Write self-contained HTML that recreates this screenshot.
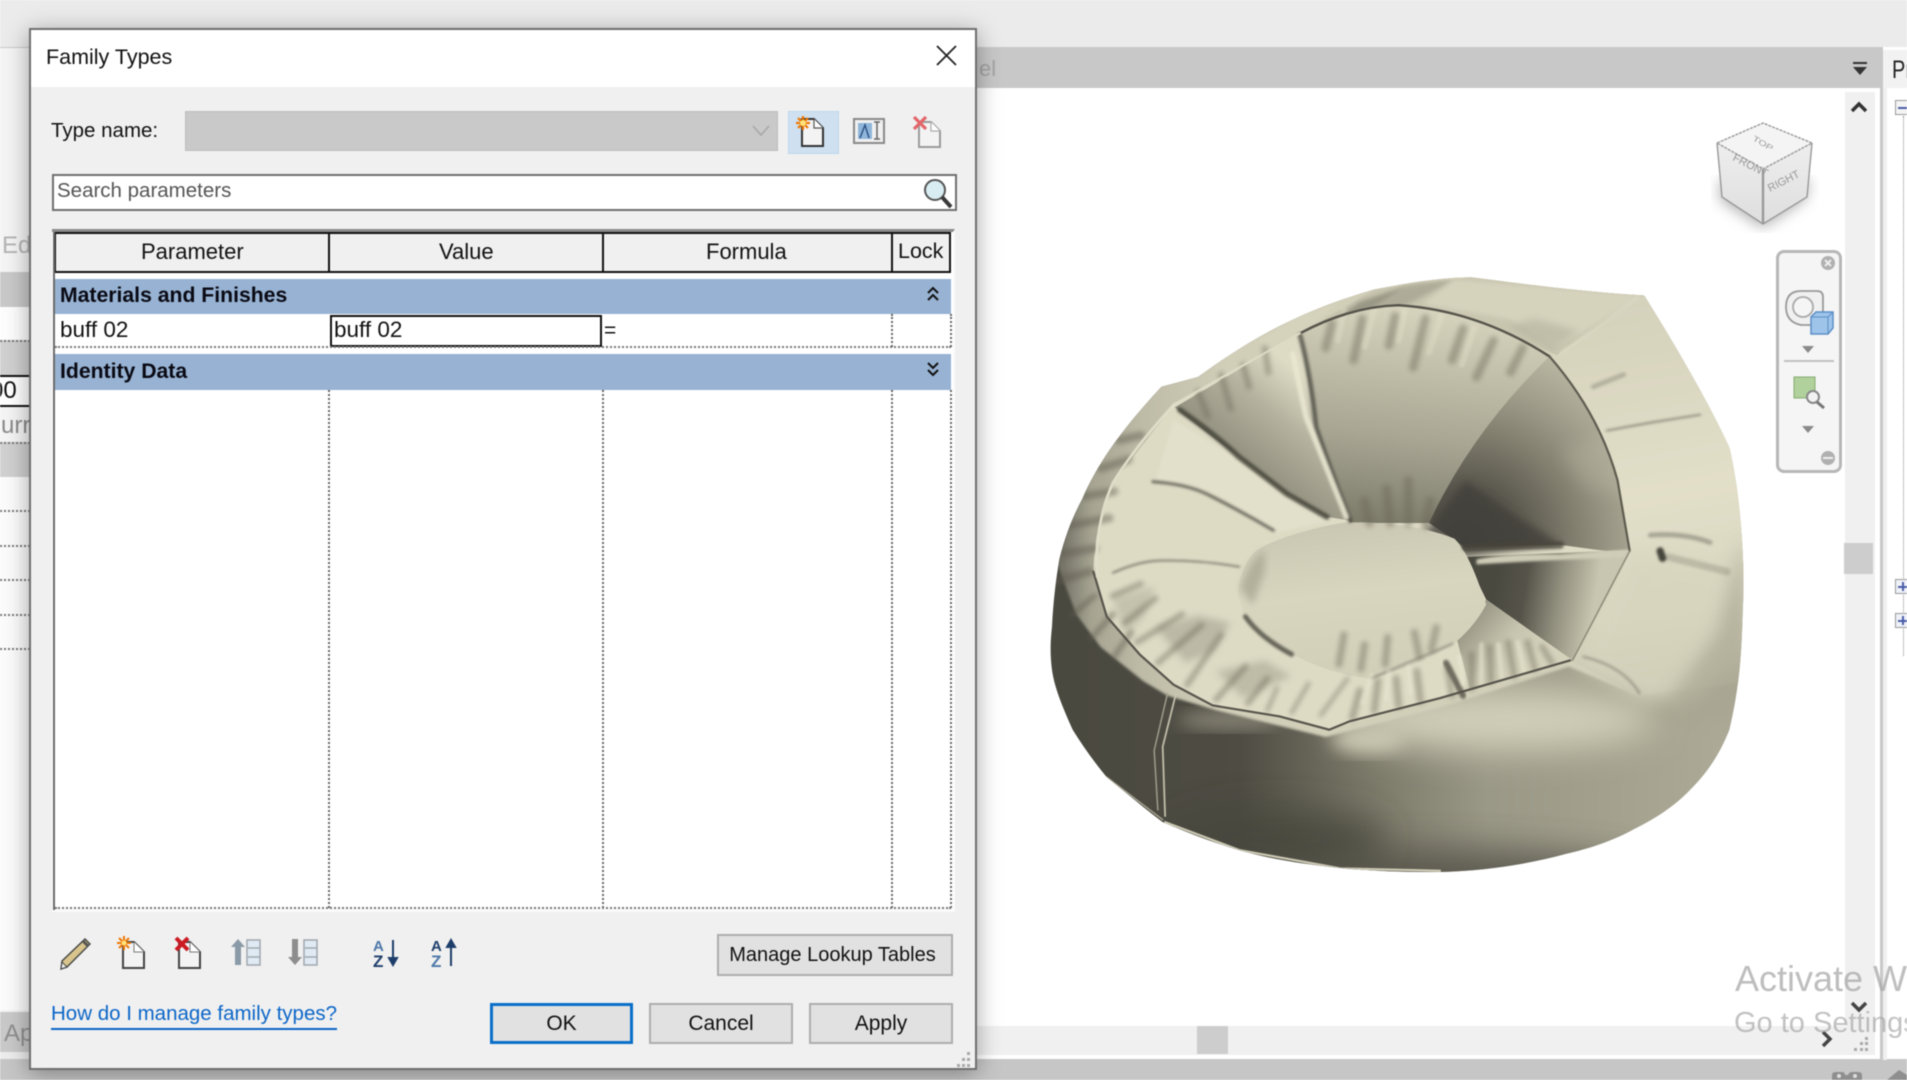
<!DOCTYPE html>
<html><head><meta charset="utf-8"><title>Family Types</title>
<style>
html,body{margin:0;padding:0;width:1907px;height:1080px;overflow:hidden;background:#fff}
body{font-family:"Liberation Sans",sans-serif;color:#111}
#p{position:absolute;left:0;top:0;width:1907px;height:1080px;overflow:hidden;filter:blur(.45px)}
.a{position:absolute}
.t{position:absolute;white-space:nowrap;line-height:1}
.btn{position:absolute;box-sizing:border-box;background:#e1e1e1;border:2px solid #adadad;text-align:center;font-size:21px;color:#111}
.dv{position:absolute;width:0;border-left:2px dotted #666}
.dh{position:absolute;height:0;border-top:2px dotted #777}
</style></head><body>
<div id="p">

<!-- application background -->
<div class="a" style="left:0;top:0;width:1907px;height:47px;background:#ebebeb"></div>
<div class="a" style="left:0;top:47px;width:30px;height:1012px;background:#f4f4f4;overflow:hidden">
  <div class="a" style="left:0;top:-1px;width:30px;height:2px;background:#c9c9c9"></div>
  <div class="t" style="left:2px;top:187px;font-size:24px;color:#b4b4b4">Edi</div>
  <div class="a" style="left:0;top:225px;width:30px;height:35px;background:#c9c9c9"></div>
  <div class="a" style="left:0;top:260px;width:30px;height:33px;background:#fdfdfd"></div>
  <div class="a" style="left:0;top:293px;width:30px;height:35px;background:#d0d0d0"></div>
  <div class="a" style="left:0;top:328px;width:30px;height:32px;background:#fff;border-top:2px solid #111;border-bottom:2px solid #111;box-sizing:border-box"></div>
  <div class="t" style="left:-10px;top:332px;font-size:24px;color:#111">00</div>
  <div class="t" style="left:1px;top:367px;font-size:24px;color:#8a8a8a">urr</div>
  <div class="a" style="left:0;top:395px;width:30px;height:35px;background:#d0d0d0"></div>
  <div class="a" style="left:0;top:430px;width:30px;height:533px;background:#fbfbfb"></div>
  <div class="dh" style="left:0;top:293px;width:30px"></div>
  <div class="dh" style="left:0;top:395px;width:30px"></div>
  <div class="dh" style="left:0;top:463px;width:30px"></div>
  <div class="dh" style="left:0;top:498px;width:30px"></div>
  <div class="dh" style="left:0;top:532px;width:30px"></div>
  <div class="dh" style="left:0;top:567px;width:30px"></div>
  <div class="dh" style="left:0;top:601px;width:30px"></div>
  <div class="a" style="left:0;top:965px;width:30px;height:40px;background:#c9c9c9"></div>
  <div class="t" style="left:4px;top:975px;font-size:24px;color:#8f8f8f">Ap</div>
  <div class="a" style="left:0;top:1005px;width:30px;height:8px;background:#ececec"></div>
</div>
<div class="a" style="left:977px;top:47px;width:905px;height:41px;background:#c8c8c8"></div>
<div class="t" style="left:979px;top:58px;font-size:22px;color:#a5a5a5">el</div>
<svg class="a" style="left:1850px;top:60px" width="20" height="18"><rect x="3" y="2" width="14" height="2" fill="#333"/><path d="M3 7H17L10 15Z" fill="#333"/></svg>

<!-- bottom status -->
<div class="a" style="left:0;top:1059px;width:1907px;height:21px;background:#c6c6c6"></div>
<svg class="a" style="left:1828px;top:1068px" width="79" height="12"><path d="M4 12V7Q4 4 8 4H14Q17 4 17 7H20Q21 4 24 4H30Q34 4 34 7V12Z" fill="#8f8f8f"/><circle cx="11" cy="8" r="2" fill="#ddd"/><circle cx="27" cy="8" r="2" fill="#ddd"/><path d="M59 12L71 2L79 7V12Z" fill="#8f8f8f"/></svg>

<!-- scrollbars -->
<div class="a" style="left:1845px;top:92px;width:30px;height:963px;background:#f0f0f0"></div>
<div class="a" style="left:977px;top:1026px;width:898px;height:29px;background:#f0f0f0"></div>
<div class="a" style="left:1844px;top:543px;width:29px;height:31px;background:#cdcdcd"></div>
<div class="a" style="left:1197px;top:1026px;width:31px;height:28px;background:#cdcdcd"></div>
<svg class="a" style="left:1850px;top:100px" width="18" height="14"><path d="M2 11L9 4L16 11" fill="none" stroke="#333" stroke-width="3.5"/></svg>
<svg class="a" style="left:1850px;top:1000px" width="18" height="14"><path d="M2 3L9 10L16 3" fill="none" stroke="#444" stroke-width="3.5"/></svg>
<svg class="a" style="left:1820px;top:1030px" width="14" height="18"><path d="M3 2L10 9L3 16" fill="none" stroke="#444" stroke-width="3.5"/></svg>
<svg class="a" style="left:1852px;top:1035px" width="20" height="20" fill="#aaa"><rect x="13" y="2" width="3" height="3"/><rect x="8" y="7" width="3" height="3"/><rect x="13" y="7" width="3" height="3"/><rect x="2" y="13" width="3" height="3"/><rect x="8" y="13" width="3" height="3"/><rect x="13" y="13" width="3" height="3"/></svg>

<!-- right panel -->
<div class="a" style="left:1880px;top:47px;width:3px;height:1013px;background:#c8c8c8"></div>
<div class="a" style="left:1883px;top:50px;width:24px;height:38px;background:#f2f2f2;overflow:hidden"><div class="t" style="left:9px;top:8px;font-size:25px;color:#222;transform:scaleX(.8);transform-origin:left top">Pr</div></div>
<div class="a" style="left:1883px;top:88px;width:4px;height:972px;background:#f0f0f0"></div>
<div class="a" style="left:1895px;top:100px;width:12px;height:15px;border:1px solid #999;border-right:0;background:#f4f4f4;box-sizing:border-box"></div>
<div class="a" style="left:1898px;top:107px;width:9px;height:2px;background:#4b5ea8"></div>
<div class="dv" style="left:1903px;top:116px;height:540px;border-left:1px dotted #888"></div>
<div class="a" style="left:1895px;top:579px;width:12px;height:15px;border:1px solid #999;border-right:0;background:#eef1f8;box-sizing:border-box"></div>
<div class="a" style="left:1898px;top:586px;width:9px;height:2px;background:#4b5ea8"></div>
<div class="a" style="left:1902px;top:582px;width:2px;height:9px;background:#4b5ea8"></div>
<div class="a" style="left:1895px;top:613px;width:12px;height:15px;border:1px solid #999;border-right:0;background:#eef1f8;box-sizing:border-box"></div>
<div class="a" style="left:1898px;top:620px;width:9px;height:2px;background:#4b5ea8"></div>
<div class="a" style="left:1902px;top:616px;width:2px;height:9px;background:#4b5ea8"></div>

<!-- bean bag -->
<svg class="a" style="left:0;top:0" width="1907" height="1080" viewBox="0 0 1568 888">
<defs>
<clipPath id="bag"><path d="M1352 243C1375 280 1402 325 1422 368C1432 410 1435 470 1433 500C1432 540 1430 565 1422 600C1412 625 1400 640 1384 655C1370 668 1355 676 1343 682C1325 692 1305 698 1288 702C1255 711 1220 716 1184 717C1150 717 1120 716 1088 712C1062 709 1040 705 1019 699C995 692 975 684 956 676C940 664 925 651 910 639C900 627 890 613 882 600C873 580 867 565 865 551C863 535 864 525 865 515C866 495 868 478 871 460C876 440 882 425 890 410C905 375 930 345 955 318L985 310C1020 285 1060 258 1130 238C1160 232 1190 228 1210 228C1240 232 1300 240 1352 243Z"/></clipPath>
<clipPath id="inner"><path d="M966 332L1069 274Q1110 252 1150 251Q1215 255 1274 293Q1315 340 1330 395L1340 453L1293 543L1184 574L1093 600L1052 589L997 580L965 563L937 538L910 507L899 470Q900 430 915 397Z"/></clipPath>
<linearGradient id="low" x1="865" y1="0" x2="1433" y2="0" gradientUnits="userSpaceOnUse">
<stop offset="0" stop-color="#4a4940"/><stop offset=".27" stop-color="#4e4c43"/><stop offset=".44" stop-color="#767464"/><stop offset=".63" stop-color="#9a9886"/><stop offset=".83" stop-color="#a5a28f"/><stop offset="1" stop-color="#aeab98"/></linearGradient>
<linearGradient id="ring" x1="866" y1="0" x2="1010" y2="0" gradientUnits="userSpaceOnUse"><stop offset="0" stop-color="#66645a"/><stop offset=".22" stop-color="#a6a491"/><stop offset=".5" stop-color="#bdbaa6"/><stop offset="1" stop-color="#d2cfb9"/></linearGradient>
<linearGradient id="cush" x1="1170" y1="255" x2="1150" y2="430" gradientUnits="userSpaceOnUse"><stop offset="0" stop-color="#d6d3bd"/><stop offset=".25" stop-color="#c3c0ab"/><stop offset=".6" stop-color="#a9a794"/><stop offset="1" stop-color="#7e7c6b"/></linearGradient>
<radialGradient id="pit" cx="1205" cy="445" r="165" gradientUnits="userSpaceOnUse"><stop offset="0" stop-color="#45443b"/><stop offset=".25" stop-color="#55534a"/><stop offset=".55" stop-color="#827f6f"/><stop offset=".8" stop-color="#a3a18e"/><stop offset="1" stop-color="#b8b5a1"/></radialGradient>
<linearGradient id="pit2" x1="1228" y1="488" x2="1310" y2="502" gradientUnits="userSpaceOnUse"><stop offset="0" stop-color="#4a4940"/><stop offset=".3" stop-color="#56544a"/><stop offset=".65" stop-color="#93917f"/><stop offset="1" stop-color="#c8c5b0"/></linearGradient>
<linearGradient id="pil" x1="1110" y1="430" x2="1125" y2="555" gradientUnits="userSpaceOnUse"><stop offset="0" stop-color="#cac7b2"/><stop offset=".45" stop-color="#d9d6c0"/><stop offset="1" stop-color="#d2cfb9"/></linearGradient>
<linearGradient id="rb" x1="1345" y1="250" x2="1400" y2="560" gradientUnits="userSpaceOnUse"><stop offset="0" stop-color="#d5d2bc"/><stop offset=".5" stop-color="#e2dfc9"/><stop offset=".8" stop-color="#dad7c1"/><stop offset="1" stop-color="#bab7a3"/></linearGradient>
<linearGradient id="lc" x1="1060" y1="300" x2="1000" y2="375" gradientUnits="userSpaceOnUse"><stop offset="0" stop-color="#dedbc5"/><stop offset=".4" stop-color="#b5b29f"/><stop offset="1" stop-color="#8b8978"/></linearGradient>
<linearGradient id="rl" x1="1205" y1="500" x2="1260" y2="545" gradientUnits="userSpaceOnUse"><stop offset="0" stop-color="#8d8b7a"/><stop offset=".6" stop-color="#c6c3ae"/><stop offset="1" stop-color="#d5d2bc"/></linearGradient>
<filter id="b14" x="-30%" y="-60%" width="160%" height="220%"><feGaussianBlur stdDeviation="14"/></filter>
<filter id="b7" x="-30%" y="-30%" width="160%" height="160%"><feGaussianBlur stdDeviation="7"/></filter>
<filter id="b3" x="-20%" y="-20%" width="140%" height="140%"><feGaussianBlur stdDeviation="3"/></filter>
<filter id="b2" x="-10%" y="-10%" width="120%" height="120%"><feGaussianBlur stdDeviation="2"/></filter>
<filter id="b1" x="-20%" y="-20%" width="140%" height="140%"><feGaussianBlur stdDeviation="1.2"/></filter>
</defs>
<g clip-path="url(#bag)">
<!-- lower body -->
<rect x="850" y="220" width="600" height="510" fill="url(#low)"/>
<ellipse cx="1230" cy="592" rx="130" ry="26" fill="#d0cdb8" filter="url(#b14)"/>
<ellipse cx="1125" cy="608" rx="30" ry="11" fill="#c9c6b1" filter="url(#b7)"/>
<ellipse cx="1010" cy="592" rx="42" ry="7" fill="#b0ad9a" filter="url(#b7)" opacity=".65"/>
<ellipse cx="1170" cy="735" rx="240" ry="38" fill="#55534a" filter="url(#b14)" opacity=".85"/>
<ellipse cx="1050" cy="690" rx="90" ry="25" fill="#47463d" filter="url(#b14)" opacity=".8"/>

<!-- outer ring -->
<path d="M860 440L885 505L905 532L940 560L960 572L1000 584L1090 606L1190 580L1290 548L1348 572L1395 540L1440 500V220H860Z" fill="url(#ring)" filter="url(#b1)"/>
<path d="M1180 225H1440V560L1345 572L1295 545L1340 455L1274 293L1150 250Z" fill="url(#rb)" filter="url(#b1)"/>
<path d="M1340 453L1434 470L1434 540L1395 575L1350 576L1295 545Z" fill="#d8d5bf" filter="url(#b7)" opacity=".8"/>
<path d="M1434 440L1412 520L1370 578L1440 600Z" fill="#a7a592" filter="url(#b7)" opacity=".7"/>
<!-- top band -->
<path d="M1069 274L1130 238L1210 228L1352 243L1280 292L1210 262L1150 251Z" fill="#c9c6b0"/>
<path d="M1160 234L1196 230L1155 252L1128 254Z" fill="#aeac98" filter="url(#b2)"/>
<path d="M1196 230L1352 243L1280 286L1240 262L1170 250Z" fill="#d6d3bd" filter="url(#b2)"/>
<path d="M1118 248L1160 234L1128 254L1098 262Z" fill="#989684" filter="url(#b2)"/>
<path d="M1240 268L1278 288L1298 272L1262 262Z" fill="#a7a592" filter="url(#b3)" opacity=".45"/>
<path d="M1035 280L1068 260L1100 250L1072 272L1040 292Z" fill="#d6d3bd" filter="url(#b1)"/>

<!-- inside the seam -->
<g clip-path="url(#inner)">
<rect x="890" y="240" width="470" height="380" fill="#dedbc5"/>
<!-- left triangular cushion -->
<path d="M966 335L1069 274L1082 351L1110 428L1091 425L1058 406L1019 376L972 340Z" fill="url(#lc)"/>
<!-- bright strip between creases -->
<path d="M965 345L1018 378L1058 408L1092 428L1050 438L1000 408L950 396Z" fill="#e2dfca" filter="url(#b1)"/>
<!-- main cushion -->
<path d="M1069 274Q1110 252 1150 251Q1215 255 1274 293Q1210 355 1182 430L1110 430L1082 351Z" fill="url(#cush)"/>
<!-- pit -->
<path d="M1274 293Q1315 340 1330 395L1342 456L1283 448L1205 450L1175 430Q1210 355 1274 293Z" fill="url(#pit)"/>
<path d="M1283 370L1342 350L1342 410L1302 400Z" fill="#bdbaa6" filter="url(#b7)" opacity=".35"/>
<path d="M1205 395L1240 420L1283 447L1205 458L1170 440Z" fill="#42413a" filter="url(#b3)" opacity=".8"/>
<!-- below crease -->
<path d="M1205 458L1342 452L1293 543L1222 493Z" fill="url(#pit2)"/>
<path d="M1214 460Q1240 454 1283 456L1340 452L1340 458Q1290 460 1250 462L1214 464Z" fill="#cfccb7" filter="url(#b1)"/>
<!-- front roll -->
<path d="M899 472L1018 468L1022 504L1065 539L1127 558L1195 529L1222 493L1293 543L1184 576L1093 602L997 582L937 540Z" fill="#dedbc5"/>
<path d="M1198 526L1222 493L1293 543L1210 572Z" fill="url(#rl)"/>
<!-- shaded patches on roll -->
<path d="M950 516L985 506L1012 512L998 535L975 545Z" fill="#b0ae9b" filter="url(#b3)" opacity=".75"/>
<path d="M1000 552L1040 543L1062 556L1022 574Z" fill="#b3b09d" filter="url(#b3)" opacity=".75"/>
<path d="M915 492L950 482L940 508L925 522Z" fill="#b3b09d" filter="url(#b3)" opacity=".6"/>
</g>

<!-- pillow -->
<path d="M1018 487C1020 470 1026 458 1034 452C1050 442 1080 434 1103 430C1130 428 1170 432 1196 443C1208 455 1216 480 1222 497C1215 510 1205 522 1193 531C1170 545 1148 552 1127 558C1108 556 1085 550 1065 539C1048 528 1030 516 1022 504Z" fill="url(#pil)"/>
<path d="M1020 484C1024 468 1032 458 1040 452L1040 470L1030 498Z" fill="#a4a28f" filter="url(#b3)" opacity=".7"/>
<path d="M1024 507Q1036 524 1062 538" fill="none" stroke="#47463d" stroke-width="4" stroke-linecap="round" filter="url(#b1)" opacity=".8"/>
<path d="M1189 545L1203 572" fill="none" stroke="#3f3e36" stroke-width="5" stroke-linecap="round" filter="url(#b1)" opacity=".7"/>
<path d="M1127 558L1195 529" fill="none" stroke="#76746a" stroke-width="2" filter="url(#b1)" opacity=".55"/>

<!-- ring streaks -->
<g fill="none" stroke="#5e5c50" stroke-linecap="round" filter="url(#b2)" opacity=".45">
<path d="M868 478L896 470M874 455L900 451M880 432L912 426M892 408L916 404M905 385L928 378M920 362L938 358" stroke-width="7"/>
<path d="M882 505L900 490M897 525L915 505M916 540L930 520" stroke-width="5"/>
</g>
<!-- creases -->
<g fill="none" stroke="#45443b" stroke-linecap="round" filter="url(#b1)">
<path d="M970 337Q1000 358 1019 376Q1040 392 1058 406L1091 425" stroke-width="4.5" opacity=".85"/>
<path d="M948 396Q975 398 992 406Q1020 420 1047 436" stroke-width="2.6" opacity=".7"/>
<path d="M1069 276Q1078 310 1082 351Q1095 390 1110 428" stroke-width="4" opacity=".7"/>
<path d="M915 471Q935 462 951 461Q985 460 1019 466" stroke-width="1.4" opacity=".7"/>
<path d="M1205 450L1283 448" stroke-width="6" opacity=".75"/>
<path d="M1321 354L1360 347L1398 341" stroke-width="1.5" opacity=".55"/>
<path d="M1310 318L1335 308" stroke-width="4" opacity=".25"/>
<path d="M1357 440Q1385 438 1406 446" stroke-width="4" opacity=".35"/>
<path d="M1372 458L1420 470" stroke-width="6" opacity=".2"/>
<path d="M1302 540Q1335 548 1348 570" stroke-width="2" opacity=".35"/>
<path d="M1365 453L1367 459" stroke-width="6"/>
</g>
<!-- gathered wrinkles: soft, irregular -->
<g fill="none" stroke="#6a6859" stroke-linecap="round" filter="url(#b2)" opacity=".42">
<path d="M1140 402L1143 430M1158 395L1158 430M1122 412L1126 430M1176 412L1172 432" stroke-width="7" opacity="1"/>
<path d="M985 322L993 342M1004 308L1012 336M1022 300L1027 318M1040 286L1043 306" stroke-width="5"/>
<path d="M1095 266L1090 286M1120 262L1113 296M1147 260L1142 284M1172 262L1162 302M1203 270L1194 296M1228 280L1214 310M1252 286L1242 306" stroke-width="7"/>
<path d="M1105 522L1101 546M1122 530L1119 550M1141 524L1139 546M1163 520L1167 540M1181 516L1177 534" stroke-width="6"/>
<path d="M915 490L938 480M925 512L950 492M935 528L972 505M952 545L988 514M976 563L1004 522M1000 575L1024 548M1026 578L1042 558" stroke-width="5"/>
<path d="M1042 584L1050 566M1062 586L1076 562M1086 588L1108 558" stroke-width="3.500"/>
<path d="M1112 590L1118 568M1130 584L1133 560M1150 580L1148 558M1168 576L1165 552" stroke-width="6"/>
<path d="M1194 572L1190 550M1210 566L1210 538M1226 560L1225 532M1245 556L1240 528M1262 550L1256 528M1276 545L1268 532" stroke-width="5"/>
</g>
<!-- highlights -->
<g fill="none" stroke="#eae7d1" stroke-linecap="round" filter="url(#b1)" opacity=".9">
<path d="M1063 291L1074 343L1107 425" stroke-width="4.500"/>
<path d="M1283 290L1348 244" stroke-width="1.600" opacity=".7"/>
<path d="M1105 255L1100 280M1130 255L1122 285M1155 255L1150 280M1185 260L1175 290M1212 270L1202 300" stroke-width="5" opacity=".35"/>
<path d="M1120 578L1128 555M1140 575L1142 552M1160 570L1158 548" stroke-width="4" opacity=".5"/>
<path d="M1203 562L1200 540M1218 562L1218 530M1235 558L1232 530M1253 552L1248 528" stroke-width="4" opacity=".6"/>
</g>
<!-- seams -->
<g fill="none" stroke-linejoin="round" stroke-linecap="round">
<path d="M1069 274Q1110 252 1150 251Q1215 255 1274 293" stroke="#55534a" stroke-width="2"/>
<path d="M1274 293Q1315 340 1330 395L1340 453" stroke="#5c5a4e" stroke-width="1.800"/>
<path d="M1340 453L1293 543" stroke="#8a8877" stroke-width="1.200"/>
<path d="M1291 543L1184 574L1110 593L1093 600L1052 589L997 580L965 563L937 538L910 507L899 470" stroke="#55534a" stroke-width="1.800"/>
<path d="M966 332Q935 365 915 397Q900 430 902 474" stroke="#e0ddc8" stroke-width="2.200" stroke-dasharray="6 1"/>
<path d="M966 332L1069 274" stroke="#dedbc6" stroke-width="1.600"/>
<path d="M967 570L956 614L958 671" stroke="#c9c6b1" stroke-width="1.400"/>
<path d="M960 570L949 617L952 666" stroke="#a9a794" stroke-width="1.100"/>
<path d="M958 676L1019 699L1102 714L1184 716" stroke="#cfccb7" stroke-width="1.800"/>
<path d="M910 639L956 674" stroke="#a9a794" stroke-width="1.200"/>
</g>
</g>
</svg>

<!-- Nav cube -->
<svg class="a" style="left:1700px;top:110px" width="130" height="135">
<defs><filter id="cs"><feGaussianBlur stdDeviation="7"/></filter>
<linearGradient id="cf" x1="0" y1="0" x2="0" y2="1"><stop offset="0" stop-color="#f2f2f2"/><stop offset="1" stop-color="#dedede"/></linearGradient></defs>
<path d="M20 90L63 118L105 90L110 70L20 70Z" fill="#999" filter="url(#cs)" opacity=".75"/>
<path d="M17 33L63 13L112 33L107 87L63 114L22 87Z" fill="url(#cf)"/>
<path d="M17 33L63 59L112 33L63 13Z" fill="#f4f4f4"/>
<g fill="none" stroke="#999" stroke-width="1.400"><path d="M17 33L63 13L112 33L63 59Z" stroke-dasharray="3 1"/><path d="M17 33L22 87L63 114L107 87L112 33"/><path d="M63 59V114" stroke-width="2.400"/></g>
<text transform="translate(32 50) rotate(27)" font-size="11" fill="#999" font-family="Liberation Sans">FRONT</text>
<text transform="translate(70 82) rotate(-27)" font-size="11" fill="#999" font-family="Liberation Sans">RIGHT</text>
<text transform="translate(52 30) rotate(30) scale(1,.7)" font-size="11" fill="#999" font-family="Liberation Sans">TOP</text>
</svg>

<!-- Nav bar -->
<div class="a" style="left:1776px;top:250px;width:66px;height:223px;box-sizing:border-box;background:#f5f5f5;border:3px solid #b7b7b7;border-radius:8px"></div>
<svg class="a" style="left:1776px;top:250px" width="66" height="223">
<circle cx="52" cy="13" r="7" fill="#b0b0b0"/><path d="M49 10L55 16M55 10L49 16" stroke="#eee" stroke-width="2"/>
<path d="M25 41H41Q47 41 47 47V75H25Q10 72 10 57Q10 41 25 41Z" fill="#f0f0f0" stroke="#999" stroke-width="1.800"/>
<circle cx="27" cy="57" r="10" fill="#f5f5f5" stroke="#aaa" stroke-width="1.800"/>
<path d="M35 67L40 62H57V78L52 84H35Z" fill="#9fc4ea" stroke="#5b8fc7" stroke-width="1.500"/>
<path d="M35 67H52V84M52 67L57 62" fill="none" stroke="#5b8fc7" stroke-width="1"/>
<path d="M26 96H38L32 103Z" fill="#8a8a8a"/>
<rect x="8" y="110" width="50" height="2" fill="#c0c0c0"/>
<rect x="18" y="127" width="21" height="21" fill="#b0d09c" stroke="#86ab70" stroke-width="1"/>
<circle cx="37" cy="147" r="6" fill="#f2f2f2" stroke="#888" stroke-width="2"/>
<path d="M41 152L48 158" stroke="#777" stroke-width="3"/>
<path d="M26 176H38L32 183Z" fill="#8a8a8a"/>
<circle cx="52" cy="208" r="7" fill="#b0b0b0"/><rect x="47" y="207" width="10" height="2" fill="#eee"/>
</svg>

<!-- Activate Windows -->
<div class="a" style="left:1720px;top:950px;width:187px;height:100px;overflow:hidden">
<div class="t" style="left:15px;top:11px;font-size:36px;color:#a8a8a8;opacity:.75">Activate Windows</div>
<div class="t" style="left:14px;top:59px;font-size:29px;color:#a8a8a8;opacity:.7">Go to Settings to activate</div>
</div>

<!-- Dialog -->
<div class="a" style="left:29px;top:28px;width:948px;height:1042px;box-sizing:border-box;background:#f0f0f0;border:2px solid #6f6f6f;box-shadow:0 4px 22px rgba(0,0,0,.35)"></div>
<div class="a" style="left:31px;top:30px;width:944px;height:57px;background:#fff"></div>
<div class="t" style="left:46px;top:47px;font-size:21.5px;color:#111">Family Types</div>
<svg class="a" style="left:935px;top:44px" width="24" height="24"><path d="M2 2L21 21M21 2L2 21" stroke="#222" stroke-width="1.800"/></svg>

<div class="t" style="left:51px;top:121px;font-size:20.5px;color:#111">Type name:</div>
<div class="a" style="left:185px;top:111px;width:593px;height:40px;background:#c9c9c9;border:1px solid #bdbdbd;box-sizing:border-box"></div>
<svg class="a" style="left:750px;top:124px" width="22" height="14"><path d="M3 2L11 11L19 2" fill="none" stroke="#a8a8a8" stroke-width="1.600"/></svg>
<div class="a" style="left:788px;top:111px;width:51px;height:43px;background:#cfe1f0;border:1px solid #bcd7ec;box-sizing:border-box"></div>
<!-- new type -->
<svg class="a" style="left:790px;top:110px" width="50" height="44">
<path d="M12 9H24L33 18V36H12Z" fill="#f3f3f3" stroke="#333" stroke-width="2"/><path d="M24 9V18H33" fill="#fff" stroke="#555" stroke-width="1.200"/>
<g stroke="#ee7700" stroke-width="2.200"><path d="M13 6V20M6 13H20M8 8L18 18M18 8L8 18"/></g><circle cx="13" cy="13" r="3" fill="#ffe27a"/>
</svg>
<!-- rename -->
<svg class="a" style="left:852px;top:117px" width="36" height="30">
<rect x="2" y="2" width="30" height="24" fill="#f0f0f0" stroke="#8a8a8a" stroke-width="2"/>
<rect x="6" y="6" width="14" height="16" fill="#8fb6da"/>
<path d="M8 21L13 8L17 21" fill="none" stroke="#2c4f82" stroke-width="1.400"/>
<path d="M25 5V22M22 5H28M22 22H28" stroke="#666" stroke-width="1.500" fill="none"/>
</svg>
<!-- delete type -->
<svg class="a" style="left:910px;top:110px" width="36" height="44">
<path d="M9 12H21L30 21V37H9Z" fill="#f3f3f3" stroke="#9b9b9b" stroke-width="2"/><path d="M21 12V21H30" fill="#fff" stroke="#aaa" stroke-width="1.200"/>
<path d="M4 7L16 19M16 7L4 19" stroke="#e2666a" stroke-width="3.200"/>
</svg>

<div class="a" style="left:52px;top:174px;width:905px;height:37px;box-sizing:border-box;background:#fff;border:2px solid #6f6f6f"></div>
<div class="t" style="left:57px;top:181px;font-size:20.5px;color:#555">Search parameters</div>
<svg class="a" style="left:920px;top:176px" width="34" height="34"><circle cx="15" cy="14" r="10" fill="#d8edf2" stroke="#555" stroke-width="2"/><path d="M22 21L31 31" stroke="#3a3a3a" stroke-width="4"/></svg>

<!-- Table -->
<div class="a" style="left:52px;top:229px;width:903px;height:683px;box-sizing:border-box;background:#fff;border-top:3px solid #8a8a8a;border-bottom:3px solid #fafafa;border-right:2px solid #fafafa"></div>
<div class="a" style="left:53px;top:232px;width:2px;height:678px;background:#6a6a6a"></div>
<div class="a" style="left:55px;top:232px;width:896px;height:41px;box-sizing:border-box;background:#f0f0f0;border:2px solid #111;border-width:2px 2px 2px 1px"></div>
<div class="a" style="left:328px;top:232px;width:2px;height:41px;background:#111"></div>
<div class="a" style="left:602px;top:232px;width:2px;height:41px;background:#111"></div>
<div class="a" style="left:891px;top:232px;width:2px;height:41px;background:#111"></div>
<div class="t" style="left:141px;top:241px;font-size:22px">Parameter</div>
<div class="t" style="left:439px;top:241px;font-size:22px">Value</div>
<div class="t" style="left:706px;top:241px;font-size:22px">Formula</div>
<div class="t" style="left:898px;top:241px;font-size:21.5px">Lock</div>

<div class="a" style="left:55px;top:279px;width:896px;height:35px;background:#97b2d2"></div>
<div class="t" style="left:60px;top:285px;font-size:21.2px;font-weight:bold;color:#0a0a14">Materials and Finishes</div>
<svg class="a" style="left:925px;top:285px" width="16" height="20"><path d="M3 8L8 3L13 8M3 15L8 10L13 15" fill="none" stroke="#111" stroke-width="2"/></svg>
<div class="t" style="left:60px;top:319px;font-size:22.5px">buff 02</div>
<div class="a" style="left:330px;top:315px;width:272px;height:32px;box-sizing:border-box;background:#fff;border:2px solid #111"></div>
<div class="t" style="left:334px;top:319px;font-size:22.5px">buff 02</div>
<div class="t" style="left:604px;top:320px;font-size:21px">=</div>
<div class="dh" style="left:55px;top:346px;width:896px"></div>
<div class="dv" style="left:891px;top:314px;height:33px"></div>
<div class="dv" style="left:950px;top:314px;height:33px"></div>
<div class="a" style="left:55px;top:354px;width:896px;height:36px;background:#97b2d2"></div>
<div class="t" style="left:60px;top:361px;font-size:21.2px;font-weight:bold;color:#0a0a14">Identity Data</div>
<svg class="a" style="left:925px;top:360px" width="16" height="20"><path d="M3 3L8 8L13 3M3 10L8 15L13 10" fill="none" stroke="#111" stroke-width="2"/></svg>
<div class="dv" style="left:328px;top:390px;height:518px"></div>
<div class="dv" style="left:602px;top:390px;height:518px"></div>
<div class="dv" style="left:891px;top:390px;height:518px"></div>
<div class="dv" style="left:950px;top:390px;height:518px"></div>
<div class="dh" style="left:55px;top:907px;width:896px"></div>

<!-- toolbar -->
<svg class="a" style="left:50px;top:930px" width="440" height="50">
<!-- pencil -->
<path d="M12 31L35 9L40 14L17 37L11 39Z" fill="#d8c48c" stroke="#444" stroke-width="1.400"/><path d="M11 39L12 32L17 37Z" fill="#eee" stroke="#444" stroke-width="1"/><path d="M33 11L38 16" stroke="#555" stroke-width="3"/>
<!-- new param -->
<g transform="translate(68 3)"><path d="M5 9H16L26 19V35H5Z" fill="#f3f3f3" stroke="#444" stroke-width="2"/><path d="M16 9V19H26" fill="#fff" stroke="#777" stroke-width="1"/><g stroke="#ee7700" stroke-width="2"><path d="M6 3V17M-1 10H13M1 5L11 15M11 5L1 15"/></g><circle cx="6" cy="10" r="2.500" fill="#ffe27a"/></g>
<!-- delete param -->
<g transform="translate(124 3)"><path d="M5 9H16L26 19V35H5Z" fill="#f3f3f3" stroke="#444" stroke-width="2"/><path d="M16 9V19H26" fill="#fff" stroke="#777" stroke-width="1"/><path d="M2 5L14 17M14 5L2 17" stroke="#cc1b22" stroke-width="4"/></g>
<!-- move up -->
<g transform="translate(179 7)"><path d="M2 10L9 2L16 10H12V28H6V10Z" fill="#8a9aa6"/><rect x="18" y="3" width="13" height="25" fill="#dfeaf5" stroke="#a0a7ae" stroke-width="1.500"/><path d="M19 11H31M19 20H31" stroke="#a0a7ae" stroke-width="1.500"/></g>
<!-- move down -->
<g transform="translate(236 7)"><path d="M2 20L9 28L16 20H12V2H6V20Z" fill="#8d8d8d"/><rect x="18" y="3" width="13" height="25" fill="#dfeaf5" stroke="#a0a7ae" stroke-width="1.500"/><path d="M19 11H31M19 20H31" stroke="#a0a7ae" stroke-width="1.500"/></g>
<!-- sort -->
<g transform="translate(323 6)"><text x="0" y="15" font-size="15" font-weight="bold" fill="#4d78a8" font-family="Liberation Sans">A</text><text x="0" y="31" font-size="17" font-weight="bold" fill="#1d3e6b" font-family="Liberation Sans">Z</text><path d="M20 4V26M16 22L20 29L24 22Z" stroke="#1d3e6b" stroke-width="2" fill="#1d3e6b"/></g>
<g transform="translate(381 6)"><text x="0" y="15" font-size="15" font-weight="bold" fill="#1d3e6b" font-family="Liberation Sans">A</text><text x="0" y="31" font-size="17" font-weight="bold" fill="#4d78a8" font-family="Liberation Sans">Z</text><path d="M20 8V30M16 11L20 4L24 11Z" stroke="#1d3e6b" stroke-width="2" fill="#1d3e6b"/></g>
</svg>

<div class="btn" style="left:717px;top:934px;width:236px;height:42px;line-height:38px;font-size:20px;padding-right:5px">Manage Lookup Tables</div>
<div class="t" style="left:51px;top:1004px;font-size:20.5px;color:#0b66c8;border-bottom:2px solid #0b66c8;padding-bottom:3px">How do I manage family types?</div>
<div class="btn" style="left:490px;top:1003px;width:143px;height:41px;line-height:35px;border:3px solid #0a6fc9">OK</div>
<div class="btn" style="left:649px;top:1003px;width:144px;height:41px;line-height:37px">Cancel</div>
<div class="btn" style="left:809px;top:1003px;width:144px;height:41px;line-height:37px">Apply</div>
<svg class="a" style="left:955px;top:1050px" width="20" height="20" fill="#aaa"><rect x="12" y="2" width="3" height="3"/><rect x="7" y="8" width="3" height="3"/><rect x="12" y="8" width="3" height="3"/><rect x="2" y="14" width="3" height="3"/><rect x="7" y="14" width="3" height="3"/><rect x="12" y="14" width="3" height="3"/></svg>

</div>
</body></html>
